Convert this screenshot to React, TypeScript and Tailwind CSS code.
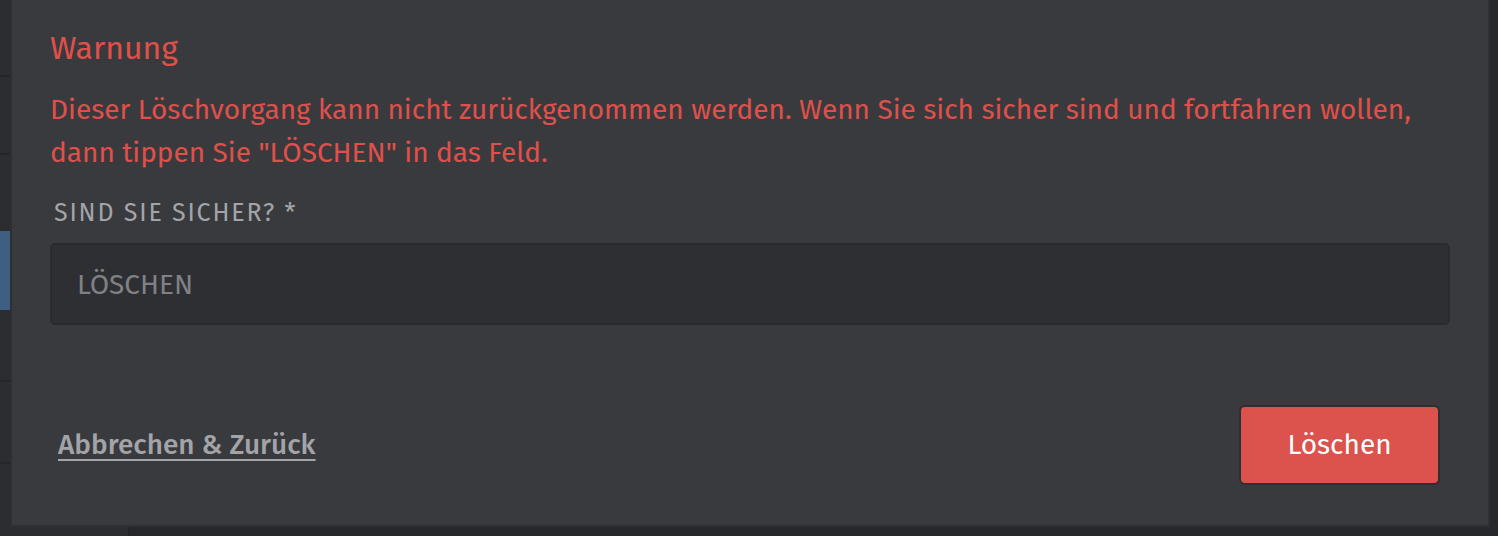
export default function App() {
  return (
    <div
      className="relative w-[1498px] h-[536px] overflow-hidden bg-[#28292c]"
      style={{ fontFamily: '"Fira Sans", "Open Sans", "Noto Sans", sans-serif' }}
    >
      {/* Page behind the dialog */}
      <div className="flex h-full">
        <div className="w-[128px] h-full flex flex-col bg-[#2c2d30]">
          <div className="h-[77px] border-b-2 border-[#242528]" />
          <div className="h-[78px] border-b-2 border-[#242528]" />
          <div className="h-[76px]" />
          <div className="h-[79px] bg-[#3e5e82]" />
          <div className="h-[72px] border-b-2 border-[#242528]" />
          <div className="h-[82px] border-b-2 border-[#242528]" />
          <div className="flex-1" />
        </div>
        <div className="flex-1 h-full bg-[#27282b] border-l border-[#222326]" />
      </div>

      {/* Dialog */}
      <div className="absolute left-[10px] top-[-2px] w-[1480px] h-[529px] bg-[#393a3e] border-2 border-[#2e2f33]">
        <div className="flex flex-col px-[38px]">
          <h2 className="mt-[28px] text-[32px] leading-[40px] text-[#e0504a]">Warnung</h2>
          <p className="mt-[20px] text-[28px] leading-[43px] text-[#e0504a]">
            Dieser Löschvorgang kann nicht zurückgenommen werden. Wenn Sie sich sicher sind und fortfahren wollen,
            <br />
            dann tippen Sie "LÖSCHEN" in das Feld.
          </p>
          <label className="mt-[23px] ml-[4px] text-[25px] leading-[32px] tracking-[1.8px] uppercase text-[#a3a4a8]">
            Sind Sie sicher? *
          </label>
          <input
            placeholder="LÖSCHEN"
            className="mt-[14px] h-[82px] w-full rounded-[5px] border-2 border-[#2a2b2e] bg-[#2e2f33] px-[25px] text-[28px] text-[#d0d1d4] placeholder:text-[#808185] outline-none"
          />
          <div className="mt-[80px] flex items-center justify-between pl-[8px] pr-[10px]">
            <a
              href="#"
              className="text-[28px] leading-[34px] font-medium text-[#a3a4a8] underline underline-offset-[5px] decoration-[2px]"
            >
              Abbrechen &amp; Zurück
            </a>
            <button className="w-[201px] h-[80px] rounded-[6px] bg-[#dc524c] border-2 border-[#2e2f33] text-[28px] text-white">
              Löschen
            </button>
          </div>
        </div>
      </div>
    </div>
  );
}
